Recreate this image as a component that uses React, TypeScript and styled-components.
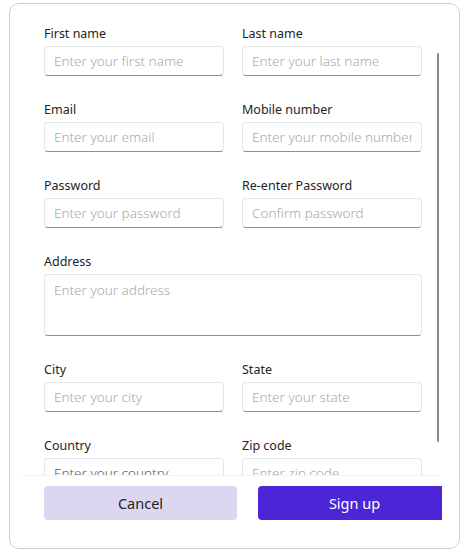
import React from 'react';
import styled, { createGlobalStyle } from 'styled-components';

const GlobalStyle = createGlobalStyle`
  html, body {
    margin: 0;
    padding: 0;
    background: #ffffff;
  }
  body {
    font-family: 'Noto Sans', 'Open Sans', sans-serif;
  }
  * {
    box-sizing: border-box;
  }
`;

const Page = styled.div`
  padding: 3px 0 0 9px;
  width: 474px;
  height: 555px;
`;

const Card = styled.div`
  width: 451px;
  height: 546px;
  border: 1px solid #cfcfcf;
  border-radius: 10px;
  background: #ffffff;
  padding: 0 18px 0 12px;
  display: flex;
  flex-direction: column;
`;

const ScrollArea = styled.div`
  position: relative;
  height: 472px;
  overflow: hidden;
  border-bottom: 1px solid #f3f3f3;
`;

const Thumb = styled.div`
  position: absolute;
  right: 2px;
  top: 49px;
  width: 2px;
  height: 389px;
  border-radius: 1px;
  background: #8a8a8a;
`;

const Fields = styled.div`
  display: grid;
  grid-template-columns: 180px 180px;
  column-gap: 18px;
  row-gap: 25px;
  padding: 21px 0 0 22px;
`;

const Field = styled.label<{ $wide?: boolean }>`
  display: flex;
  flex-direction: column;
  gap: 3px;
  grid-column: ${(p) => (p.$wide ? '1 / span 2' : 'auto')};
`;

const Label = styled.span`
  font-size: 12.5px;
  line-height: 18px;
  color: #242424;
`;

const inputBase = `
  width: 100%;
  border: 1px solid #e6e6e6;
  border-bottom-color: #8d8d8d;
  border-radius: 4px;
  background: #ffffff;
  font-family: 'Noto Sans', 'Open Sans', sans-serif;
  font-size: 13.5px;
  font-weight: 300;
  color: #242424;
  padding: 0 9px;
  outline: none;
`;

const Input = styled.input<{ $dark?: boolean }>`
  ${inputBase}
  height: 30px;
  &::placeholder {
    color: ${(p) => (p.$dark ? '#5c5c5c' : '#a9a9a9')};
  }
`;

const TextArea = styled.textarea`
  ${inputBase}
  height: 62px;
  padding-top: 6px;
  resize: none;
  &::placeholder {
    color: #a9a9a9;
  }
`;

const Footer = styled.div`
  margin: 10px 0 0 22px;
  width: 398px;
  overflow: hidden;
`;

const Buttons = styled.div`
  display: grid;
  grid-template-columns: 193px 193px;
  column-gap: 21px;
`;

const Button = styled.button<{ $primary?: boolean }>`
  height: 34px;
  border: none;
  border-radius: 4px;
  font-family: 'Noto Sans', 'Open Sans', sans-serif;
  font-size: 14.5px;
  cursor: pointer;
  background: ${(p) => (p.$primary ? '#4c25d6' : '#dcd7f1')};
  color: ${(p) => (p.$primary ? '#ffffff' : '#242424')};
`;

const fields = [
  { label: 'First name', placeholder: 'Enter your first name' },
  { label: 'Last name', placeholder: 'Enter your last name' },
  { label: 'Email', placeholder: 'Enter your email' },
  { label: 'Mobile number', placeholder: 'Enter your mobile number' },
  { label: 'Password', placeholder: 'Enter your password' },
  { label: 'Re-enter Password', placeholder: 'Confirm password' }
];

const lowerFields = [
  { label: 'City', placeholder: 'Enter your city' },
  { label: 'State', placeholder: 'Enter your state' },
  { label: 'Country', placeholder: 'Enter your country', dark: true },
  { label: 'Zip code', placeholder: 'Enter zip code' }
];

export default function App() {
  return (
    <Page>
      <GlobalStyle />
      <Card>
        <ScrollArea>
          <Fields>
            {fields.map((f) => (
              <Field key={f.label}>
                <Label>{f.label}</Label>
                <Input placeholder={f.placeholder} />
              </Field>
            ))}
            <Field $wide>
              <Label>Address</Label>
              <TextArea placeholder='Enter your address' />
            </Field>
            {lowerFields.map((f) => (
              <Field key={f.label}>
                <Label>{f.label}</Label>
                <Input placeholder={f.placeholder} $dark={f.dark} />
              </Field>
            ))}
          </Fields>
          <Thumb />
        </ScrollArea>
        <Footer>
          <Buttons>
            <Button>Cancel</Button>
            <Button $primary>Sign up</Button>
          </Buttons>
        </Footer>
      </Card>
    </Page>
  );
}
